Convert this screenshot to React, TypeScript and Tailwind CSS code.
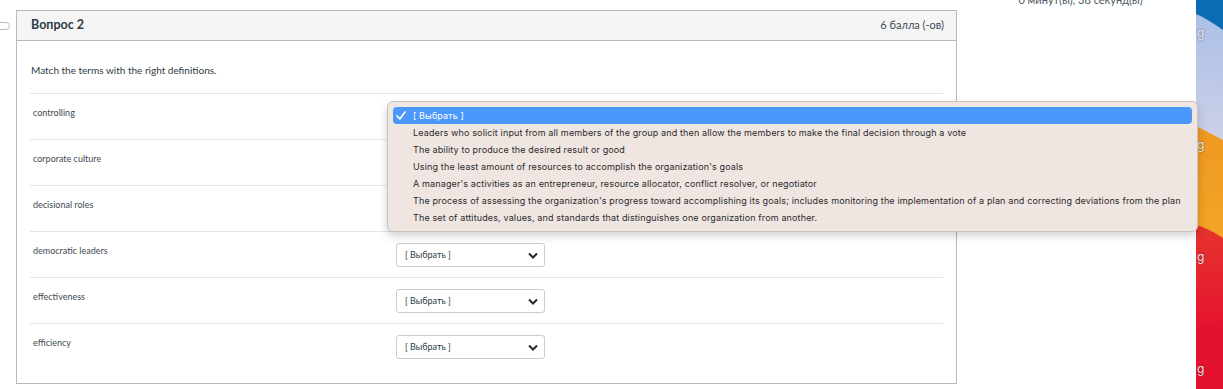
import React from 'react';

const terms = [
  'controlling',
  'corporate culture',
  'decisional roles',
  'democratic leaders',
  'effectiveness',
  'efficiency',
];

const options = [
  'Leaders who solicit input from all members of the group and then allow the members to make the final decision through a vote',
  'The ability to produce the desired result or good',
  "Using the least amount of resources to accomplish the organization's goals",
  "A manager's activities as an entrepreneur, resource allocator, conflict resolver, or negotiator",
  "The process of assessing the organization's progress toward accomplishing its goals; includes monitoring the implementation of a plan and correcting deviations from the plan",
  'The set of attitudes, values, and standards that distinguishes one organization from another.',
];

function SelectBox() {
  return (
    <div className="mt-[11px] flex h-[24px] w-[149px] items-center justify-between rounded-[3px] border border-[#c7cdd1] bg-white pl-[8px] pr-[6px]">
      <span className="text-[9px] text-[#2d3b45]">[ Выбрать ]</span>
      <svg width="10" height="7" viewBox="0 0 10 7">
        <path d="M1 1.5 L5 5.5 L9 1.5" fill="none" stroke="#1f2a33" strokeWidth="2" />
      </svg>
    </div>
  );
}

function Wallpaper() {
  return (
    <div className="relative h-full w-[27px] overflow-hidden">
      <svg className="absolute inset-0" width="27" height="389" viewBox="0 0 27 389">
        <defs>
          <linearGradient id="lav" x1="0" y1="0" x2="0" y2="1">
            <stop offset="0" stopColor="#a7bde6" />
            <stop offset="1" stopColor="#cdd1e8" />
          </linearGradient>
          <linearGradient id="org" x1="0" y1="0" x2="0" y2="1">
            <stop offset="0" stopColor="#ea8a1c" />
            <stop offset="1" stopColor="#f3a526" />
          </linearGradient>
          <linearGradient id="red" x1="0" y1="0" x2="0" y2="1">
            <stop offset="0" stopColor="#ee7a46" />
            <stop offset="0.5" stopColor="#e7462e" />
            <stop offset="1" stopColor="#e5132f" />
          </linearGradient>
        </defs>
        <rect x="0" y="0" width="27" height="389" fill="#e5122f" />
        <path d="M0 0 H27 V330 Q10 320 0 322 Z" fill="url(#red)" />
        <path d="M0 0 H27 V238 Q12 228 0 225 Z" fill="url(#org)" />
        <path d="M0 0 H27 V140 Q12 132 0 126 Z" fill="url(#lav)" />
        <path d="M0 0 H27 V30 Q10 18 0 14 Z" fill="#0b6bb4" />
      </svg>
      <div className="relative flex flex-col gap-[97px] pl-[1px] pt-[25px]">
        {[0, 1, 2, 3].map((i) => (
          <span
            key={i}
            className="h-[15px] text-[12px] leading-[15px] text-[#e8e8e8] [text-shadow:0_0_2px_rgba(0,0,0,0.5)]"
            style={{ fontFamily: 'Inter, sans-serif' }}
          >
            g
          </span>
        ))}
      </div>
    </div>
  );
}

export default function App() {
  return (
    <div className="relative flex h-[389px] w-[1223px] overflow-hidden bg-white font-['Lato',sans-serif] text-[#2d3b45]">
      {/* page */}
      <div className="flex w-[1196px] flex-none bg-white">
        <div className="-ml-[6px] mt-[22px] h-[8px] w-[16px] flex-none rounded-full border border-[#b8bec3]" />
        <div className="ml-[6px] mt-[10px] h-[374px] w-[941px] flex-none border border-[#b9b9b9]">
          <div className="flex h-[30px] items-center justify-between border-b border-[#b9b9b9] bg-[#f5f5f5] pl-[14px] pr-[12px]">
            <span className="text-[12.5px] font-bold">Вопрос 2</span>
            <span className="text-[11px] text-[#3d4a54]">6 балла (-ов)</span>
          </div>
          <div className="px-[13px] pt-[22px]">
            <p className="h-[30px] pl-[1px] text-[10px] leading-[14px]">Match the terms with the right definitions.</p>
            {terms.map((t) => (
              <div key={t} className="flex h-[46px] border-t border-[#e2e4e6]">
                <div className="w-[366px] pl-[3px] pt-[13px] text-[9px] leading-[12px] text-[#3d4a54]">{t}</div>
                <SelectBox />
              </div>
            ))}
          </div>
        </div>
        <div className="flex flex-1 justify-center">
          <span className="-mt-[7px] pl-[8px] text-[11px] leading-[14px] text-[#4d5a63]">0 минут(ы), 38 секунд(ы)</span>
        </div>
      </div>
      <Wallpaper />

      {/* open select menu */}
      <div
        className="absolute left-[387px] top-[101px] w-[811px] rounded-[6px] border border-[#c9c4c1] bg-[#efe6e2] px-[5px] pb-[5px] pt-[5px] shadow-[0_4px_10px_rgba(0,0,0,0.18)]"
        style={{ fontFamily: 'Inter, "Noto Sans", sans-serif' }}
      >
        <div className="flex h-[17px] items-center rounded-[4px] bg-[#4a98fb] text-white">
          <svg className="ml-[3px] mr-[7px]" width="10" height="9" viewBox="0 0 10 9">
            <path d="M1 4.8 L3.8 8 L9 1" fill="none" stroke="#fff" strokeWidth="1.6" strokeLinecap="round" strokeLinejoin="round" />
          </svg>
          <span className="text-[9px] tracking-[0.14px]">[ Выбрать ]</span>
        </div>
        {options.map((o) => (
          <div key={o} className="flex h-[17px] items-center pl-[20px] text-[9px] tracking-[0.14px] text-[#2b2b2b]">
            {o}
          </div>
        ))}
      </div>
    </div>
  );
}
